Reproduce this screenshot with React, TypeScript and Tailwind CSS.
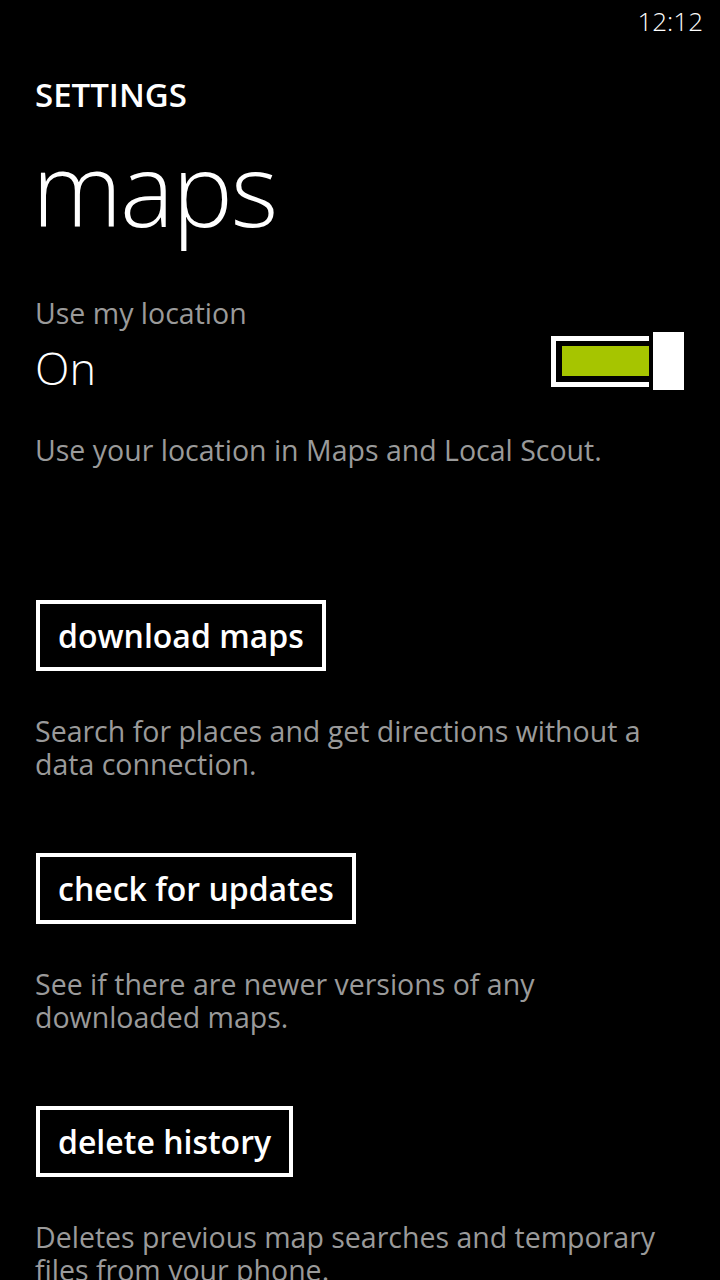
import React from 'react';

const font = { fontFamily: '"Open Sans", "Noto Sans", sans-serif' };

function ActionButton({ label }: { label: string }) {
  return (
    <div className="flex">
      <button className="ml-[1px] h-[71px] border-[4px] border-white bg-black px-[18px] text-[32px] font-semibold leading-none text-white">
        {label}
      </button>
    </div>
  );
}

function Hint({ children }: { children: React.ReactNode }) {
  return <p className="text-[28.5px] leading-[33px] text-[#9a9a9a]">{children}</p>;
}

export default function App() {
  return (
    <div className="h-[1280px] w-[720px] overflow-hidden bg-black text-white" style={font}>
      {/* status bar */}
      <div className="flex h-[44px] justify-end pr-[17px] pt-[8px]">
        <span className="text-[26px] font-light leading-none">12:12</span>
      </div>

      <div className="px-[35px]">
        <div className="mt-[34px] text-[33px] font-semibold leading-none">SETTINGS</div>
        <div className="mt-[26px] -ml-[3px] text-[102px] font-light leading-none tracking-[-2px]">maps</div>

        {/* location toggle */}
        <div className="mt-[60px] flex items-start justify-between">
          <div>
            <div className="text-[28.5px] leading-none text-[#9a9a9a]">Use my location</div>
            <div className="mt-[17px] text-[45px] font-light leading-none">On</div>
          </div>
          <div className="mr-[1px] mt-[33px] flex items-center">
            <div className="flex h-[51px] w-[98px] items-center border-y-[5px] border-l-[5px] border-white pl-[6px]">
              <div className="h-[30px] flex-1 bg-[#a6c500]" />
            </div>
            <div className="ml-[4px] h-[58px] w-[31px] bg-white" />
          </div>
        </div>

        <div className="mt-[44px]">
          <Hint>Use your location in Maps and Local Scout.</Hint>
        </div>

        <div className="mt-[133px]">
          <ActionButton label="download maps" />
        </div>
        <div className="mt-[44px]">
          <Hint>
            Search for places and get directions without a
            <br />
            data connection.
          </Hint>
        </div>

        <div className="mt-[72px]">
          <ActionButton label="check for updates" />
        </div>
        <div className="mt-[44px]">
          <Hint>
            See if there are newer versions of any
            <br />
            downloaded maps.
          </Hint>
        </div>

        <div className="mt-[72px]">
          <ActionButton label="delete history" />
        </div>
        <div className="mt-[44px]">
          <Hint>
            Deletes previous map searches and temporary
            <br />
            files from your phone.
          </Hint>
        </div>
      </div>
    </div>
  );
}
